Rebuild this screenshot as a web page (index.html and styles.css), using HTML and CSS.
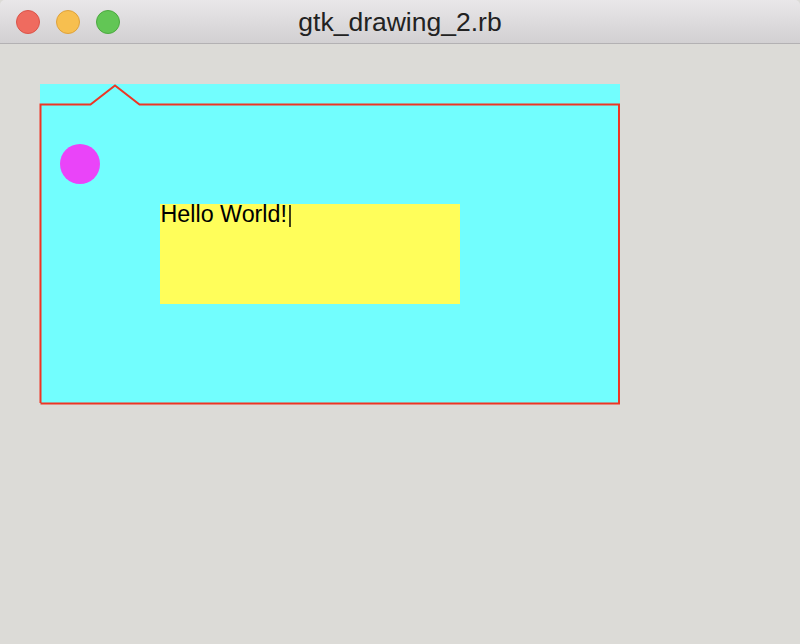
FILE: index.html
```html
<!DOCTYPE html>
<html>
<head>
<meta charset="utf-8">
<link rel="stylesheet" href="styles.css">
</head>
<body>
<div class="window">
  <div class="titlebar">
    <div class="lights">
      <span class="light red"></span>
      <span class="light yellow"></span>
      <span class="light green"></span>
    </div>
    <div class="title">gtk_drawing_2.rb</div>
  </div>
  <div class="content">
    <svg class="canvas" width="800" height="600" viewBox="0 44 800 600">
      <rect x="40" y="84" width="580" height="320" fill="#72fefe"/>
      <polyline points="40.5,403 40.5,104.5 90.5,104.5 115,85.5 139.5,104.5 619,104.5 619,403.5 40.5,403.5" fill="none" stroke="#ee3524" stroke-width="2"/>
      <circle cx="80" cy="164" r="20" fill="#ea44f9"/>
      <rect x="160" y="204" width="300" height="100" fill="#fffe5a"/>
      <text x="160.5" y="222" class="hello">Hello World!</text>
      <line x1="290" y1="205" x2="290" y2="227" stroke="#000" stroke-width="1.5"/>
    </svg>
  </div>
</div>
</body>
</html>
```
FILE: styles.css
```css
html, body {
  margin: 0;
  padding: 0;
  background: #dcdbd7;
}
.window {
  width: 800px;
  height: 644px;
  display: flex;
  flex-direction: column;
  background: #dcdbd7;
  overflow: hidden;
}
.titlebar {
  height: 43px;
  flex: none;
  position: relative;
  display: flex;
  align-items: center;
  justify-content: center;
  background: linear-gradient(#e9e7e9, #d2d0d2);
  border-bottom: 1px solid #b3b1b3;
  border-radius: 5px 5px 0 0;
}
.lights {
  position: absolute;
  left: 16px;
  top: 10px;
  display: flex;
  gap: 16px;
}
.light {
  width: 24px;
  height: 24px;
  border-radius: 50%;
  box-sizing: border-box;
}
.red { background: #ef6b5f; border: 1px solid #db5449; }
.yellow { background: #f7bf4f; border: 1px solid #dfa23b; }
.green { background: #62c655; border: 1px solid #4ca940; }
.title {
  font-family: "Liberation Sans", Arial, sans-serif;
  font-size: 26.5px;
  color: #222222;
  padding-top: 2px;
}
.content {
  flex: 1;
}
.canvas {
  display: block;
}
.hello {
  font-family: "Liberation Sans", Arial, sans-serif;
  font-size: 23.3px;
  fill: #000;
}
```
